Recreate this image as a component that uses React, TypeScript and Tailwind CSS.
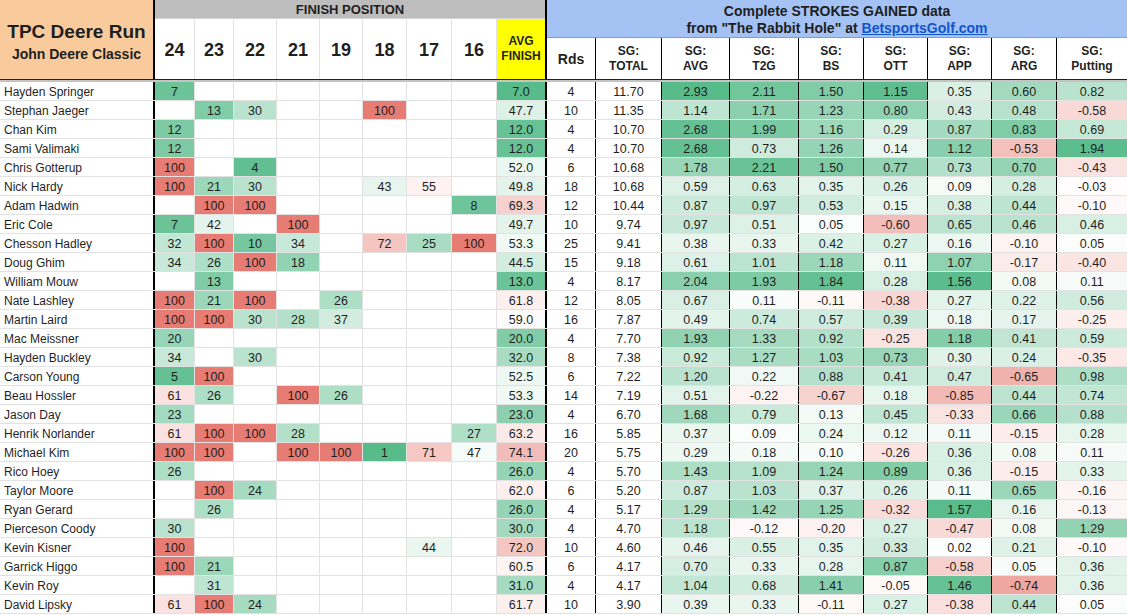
import React from "react";

type Row = { n: string; f: (number | null)[]; avg: number; rds: number; tot: string; sg: number[] };

const rows: Row[] = [
  { n: "Hayden Springer", f: [7, null, null, null, null, null, null, null], avg: 7.0, rds: 4, tot: "11.70", sg: [2.93, 2.11, 1.5, 1.15, 0.35, 0.6, 0.82] },
  { n: "Stephan Jaeger", f: [null, 13, 30, null, null, 100, null, null], avg: 47.7, rds: 10, tot: "11.35", sg: [1.14, 1.71, 1.23, 0.8, 0.43, 0.48, -0.58] },
  { n: "Chan Kim", f: [12, null, null, null, null, null, null, null], avg: 12.0, rds: 4, tot: "10.70", sg: [2.68, 1.99, 1.16, 0.29, 0.87, 0.83, 0.69] },
  { n: "Sami Valimaki", f: [12, null, null, null, null, null, null, null], avg: 12.0, rds: 4, tot: "10.70", sg: [2.68, 0.73, 1.26, 0.14, 1.12, -0.53, 1.94] },
  { n: "Chris Gotterup", f: [100, null, 4, null, null, null, null, null], avg: 52.0, rds: 6, tot: "10.68", sg: [1.78, 2.21, 1.5, 0.77, 0.73, 0.7, -0.43] },
  { n: "Nick Hardy", f: [100, 21, 30, null, null, 43, 55, null], avg: 49.8, rds: 18, tot: "10.68", sg: [0.59, 0.63, 0.35, 0.26, 0.09, 0.28, -0.03] },
  { n: "Adam Hadwin", f: [null, 100, 100, null, null, null, null, 8], avg: 69.3, rds: 12, tot: "10.44", sg: [0.87, 0.97, 0.53, 0.15, 0.38, 0.44, -0.1] },
  { n: "Eric Cole", f: [7, 42, null, 100, null, null, null, null], avg: 49.7, rds: 10, tot: "9.74", sg: [0.97, 0.51, 0.05, -0.6, 0.65, 0.46, 0.46] },
  { n: "Chesson Hadley", f: [32, 100, 10, 34, null, 72, 25, 100], avg: 53.3, rds: 25, tot: "9.41", sg: [0.38, 0.33, 0.42, 0.27, 0.16, -0.1, 0.05] },
  { n: "Doug Ghim", f: [34, 26, 100, 18, null, null, null, null], avg: 44.5, rds: 15, tot: "9.18", sg: [0.61, 1.01, 1.18, 0.11, 1.07, -0.17, -0.4] },
  { n: "William Mouw", f: [null, 13, null, null, null, null, null, null], avg: 13.0, rds: 4, tot: "8.17", sg: [2.04, 1.93, 1.84, 0.28, 1.56, 0.08, 0.11] },
  { n: "Nate Lashley", f: [100, 21, 100, null, 26, null, null, null], avg: 61.8, rds: 12, tot: "8.05", sg: [0.67, 0.11, -0.11, -0.38, 0.27, 0.22, 0.56] },
  { n: "Martin Laird", f: [100, 100, 30, 28, 37, null, null, null], avg: 59.0, rds: 16, tot: "7.87", sg: [0.49, 0.74, 0.57, 0.39, 0.18, 0.17, -0.25] },
  { n: "Mac Meissner", f: [20, null, null, null, null, null, null, null], avg: 20.0, rds: 4, tot: "7.70", sg: [1.93, 1.33, 0.92, -0.25, 1.18, 0.41, 0.59] },
  { n: "Hayden Buckley", f: [34, null, 30, null, null, null, null, null], avg: 32.0, rds: 8, tot: "7.38", sg: [0.92, 1.27, 1.03, 0.73, 0.3, 0.24, -0.35] },
  { n: "Carson Young", f: [5, 100, null, null, null, null, null, null], avg: 52.5, rds: 6, tot: "7.22", sg: [1.2, 0.22, 0.88, 0.41, 0.47, -0.65, 0.98] },
  { n: "Beau Hossler", f: [61, 26, null, 100, 26, null, null, null], avg: 53.3, rds: 14, tot: "7.19", sg: [0.51, -0.22, -0.67, 0.18, -0.85, 0.44, 0.74] },
  { n: "Jason Day", f: [23, null, null, null, null, null, null, null], avg: 23.0, rds: 4, tot: "6.70", sg: [1.68, 0.79, 0.13, 0.45, -0.33, 0.66, 0.88] },
  { n: "Henrik Norlander", f: [61, 100, 100, 28, null, null, null, 27], avg: 63.2, rds: 16, tot: "5.85", sg: [0.37, 0.09, 0.24, 0.12, 0.11, -0.15, 0.28] },
  { n: "Michael Kim", f: [100, 100, null, 100, 100, 1, 71, 47], avg: 74.1, rds: 20, tot: "5.75", sg: [0.29, 0.18, 0.1, -0.26, 0.36, 0.08, 0.11] },
  { n: "Rico Hoey", f: [26, null, null, null, null, null, null, null], avg: 26.0, rds: 4, tot: "5.70", sg: [1.43, 1.09, 1.24, 0.89, 0.36, -0.15, 0.33] },
  { n: "Taylor Moore", f: [null, 100, 24, null, null, null, null, null], avg: 62.0, rds: 6, tot: "5.20", sg: [0.87, 1.03, 0.37, 0.26, 0.11, 0.65, -0.16] },
  { n: "Ryan Gerard", f: [null, 26, null, null, null, null, null, null], avg: 26.0, rds: 4, tot: "5.17", sg: [1.29, 1.42, 1.25, -0.32, 1.57, 0.16, -0.13] },
  { n: "Pierceson Coody", f: [30, null, null, null, null, null, null, null], avg: 30.0, rds: 4, tot: "4.70", sg: [1.18, -0.12, -0.2, 0.27, -0.47, 0.08, 1.29] },
  { n: "Kevin Kisner", f: [100, null, null, null, null, null, 44, null], avg: 72.0, rds: 10, tot: "4.60", sg: [0.46, 0.55, 0.35, 0.33, 0.02, 0.21, -0.1] },
  { n: "Garrick Higgo", f: [100, 21, null, null, null, null, null, null], avg: 60.5, rds: 6, tot: "4.17", sg: [0.7, 0.33, 0.28, 0.87, -0.58, 0.05, 0.36] },
  { n: "Kevin Roy", f: [null, 31, null, null, null, null, null, null], avg: 31.0, rds: 4, tot: "4.17", sg: [1.04, 0.68, 1.41, -0.05, 1.46, -0.74, 0.36] },
  { n: "David Lipsky", f: [61, 100, 24, null, null, null, null, null], avg: 61.7, rds: 10, tot: "3.90", sg: [0.39, 0.33, -0.11, 0.27, -0.38, 0.44, 0.05] },
];

const G = [87, 187, 138];
const R = [230, 124, 115];

function mix(c: number[], t: number): string {
  const k = Math.max(0, Math.min(1, t));
  const v = c.map((x) => Math.round(255 + (x - 255) * k));
  return `rgb(${v[0]},${v[1]},${v[2]})`;
}

function finishColor(v: number): string {
  if (v <= 50) return mix(G, (50 - v) / 49);
  return mix(R, (v - 50) / 50);
}

function avgColor(v: number): string {
  if (v <= 58) return mix(G, (58 - v) / 51);
  return mix(R, (v - 58) / 32);
}

const sgMax = [2.93, 2.5, 2.0, 1.2, 1.6, 1.1, 2.0];

function sgColor(v: number, i: number): string {
  const m = sgMax[i];
  if (v >= 0) return mix(G, v / m);
  return mix(R, -v / m);
}

const finishHeads = ["24", "23", "22", "21", "19", "18", "17", "16"];
const finishW = ["w-[40px]", "w-[39px]", "w-[43px]", "w-[43px]", "w-[43px]", "w-[44px]", "w-[45px]", "w-[45px]"];

const sgHeads: [string, string][] = [
  ["SG:", "AVG"],
  ["SG:", "T2G"],
  ["SG:", "BS"],
  ["SG:", "OTT"],
  ["SG:", "APP"],
  ["SG:", "ARG"],
  ["SG:", "Putting"],
];
const sgW = ["w-[68px]", "w-[69px]", "w-[65px]", "w-[64px]", "w-[64px]", "w-[65px]", "w-[70px]"];

export default function App() {
  return (
    <div className="w-[1127px] h-[615px] overflow-hidden bg-white font-['Liberation_Sans',Arial,sans-serif] text-[#1f1f1f]">
      {/* Header */}
      <div className="flex h-[80px] border-b border-[#222]">
        <div className="w-[155px] h-full bg-[#f9cb9c] border-r-2 border-black flex flex-col items-center justify-center pt-[4px]">
          <div className="text-[19px] font-bold leading-[22px]">TPC Deere Run</div>
          <div className="text-[14px] font-bold leading-[18px] mt-[2px]">John Deere Classic</div>
        </div>
        <div className="w-[392px] h-full flex flex-col border-r-2 border-black">
          <div className="h-[19px] bg-[#bdbdbd] border-b border-[#d4d4d4] flex items-center justify-center text-[13px] font-bold leading-[18px] pt-[1px]">
            FINISH POSITION
          </div>
          <div className="flex flex-1">
            {finishHeads.map((h, i) => (
              <div
                key={h}
                className={`${finishW[i]} h-full border-r border-[#e2e2e2] flex items-center justify-center text-[18px] font-bold pt-[2px]`}
              >
                {h}
              </div>
            ))}
            <div className="w-[48px] h-full bg-[#ffff00] flex flex-col items-center justify-center text-[12px] font-bold leading-[15px]">
              <span>AVG</span>
              <span>FINISH</span>
            </div>
          </div>
        </div>
        <div className="flex-1 h-full flex flex-col">
          <div className="h-[37px] bg-[#a4c2f4] flex flex-col items-center justify-center text-[14px] font-bold leading-[17px] pt-[2px]">
            <span>Complete STROKES GAINED data</span>
            <span>
              from "The Rabbit Hole" at{" "}
              <span className="text-[#1155cc] underline">BetsportsGolf.com</span>
            </span>
          </div>
          <div className="flex flex-1 border-t border-[#9a9a9a]">
            <div className="w-[49px] h-full border-r border-black flex items-center justify-center text-[14px] font-bold pt-[1px]">
              Rds
            </div>
            <div className="w-[66px] h-full border-r border-black flex flex-col items-center justify-center text-[12px] font-bold leading-[15px] pt-[1px]">
              <span>SG:</span>
              <span>TOTAL</span>
            </div>
            {sgHeads.map(([a, b], i) => (
              <div
                key={b}
                className={`${sgW[i]} h-full ${i < 6 ? "border-r border-black" : ""} flex flex-col items-center justify-center text-[12px] font-bold leading-[15px] pt-[1px]`}
              >
                <span>{a}</span>
                <span>{b}</span>
              </div>
            ))}
          </div>
        </div>
      </div>
      <div className="h-[2px] bg-[#c4c4c4]" />

      {/* Rows */}
      {rows.map((r) => (
        <div key={r.n} className="flex h-[19px] border-b border-[#e2e2e2] text-[12.5px] leading-[18px] pt-[1px]">
          <div className="w-[155px] border-r-2 border-black pl-[4px] text-[12px] whitespace-nowrap -mt-[1px] pt-[1px]">{r.n}</div>
          {r.f.map((v, i) => (
            <div
              key={i}
              className={`${finishW[i]} border-r border-[#e2e2e2] text-center -mt-[1px] pt-[1px]`}
              style={v !== null ? { backgroundColor: finishColor(v) } : undefined}
            >
              {v !== null ? v : ""}
            </div>
          ))}
          <div className="w-[50px] border-r-2 border-black text-center -mt-[1px] pt-[1px]" style={{ backgroundColor: avgColor(r.avg) }}>
            {r.avg.toFixed(1)}
          </div>
          <div className="w-[49px] border-r border-black text-center -mt-[1px] pt-[1px]">{r.rds}</div>
          <div className="w-[66px] border-r border-black text-center -mt-[1px] pt-[1px]">{r.tot}</div>
          {r.sg.map((v, i) => (
            <div
              key={i}
              className={`${sgW[i]} ${i < 6 ? "border-r border-black" : ""} text-center -mt-[1px] pt-[1px]`}
              style={{ backgroundColor: sgColor(v, i) }}
            >
              {v.toFixed(2)}
            </div>
          ))}
        </div>
      ))}
    </div>
  );
}
